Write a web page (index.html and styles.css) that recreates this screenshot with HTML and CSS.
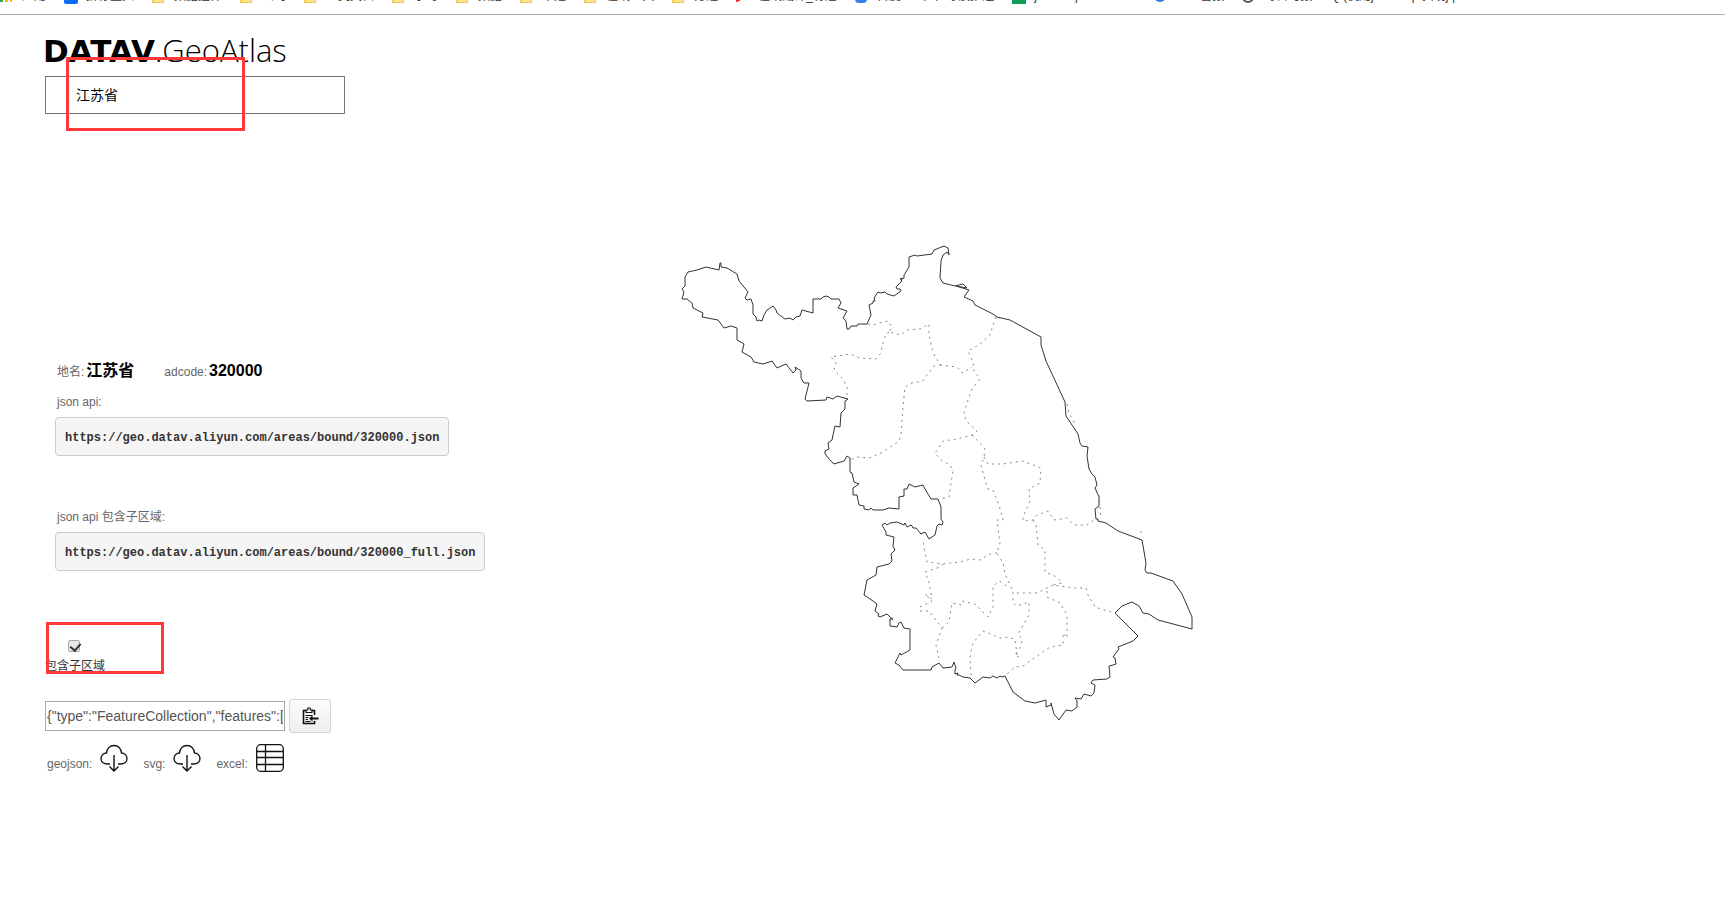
FILE: index.html
```html
<!DOCTYPE html>
<html lang="zh-CN">
<head>
    <meta charset="UTF-8">
    <meta name="viewport" content="width=device-width, initial-scale=1.0">
    <title>DATAV.GeoAtlas</title>
    <link rel="stylesheet" href="styles.css">
</head>
<body>
    <nav class="bookmarks">
        <div class="bookmark-row">
            <a href="#"><i class="icon apps"></i>应用</a>
            <a href="#"><i class="icon blue"></i>拼标盒头</a>
            <a href="#"><i class="icon folder"></i>数据控件</a>
            <a href="#"><i class="icon folder"></i>公司</a>
            <a href="#"><i class="icon folder"></i>三类文档</a>
            <a href="#"><i class="icon folder"></i>学习</a>
            <a href="#"><i class="icon folder"></i>数据</a>
            <a href="#"><i class="icon folder"></i>牛建</a>
            <a href="#"><i class="icon folder"></i>在线工具</a>
            <a href="#"><i class="icon folder"></i>方达</a>
            <a href="#"><i class="icon red"></i>在线翻译_有道</a>
            <a href="#"><i class="icon paw"></i>百度</a>
            <a href="#">中中 导航推送</a>
            <a href="#"><i class="icon green"></i>javascript - antdu...</a>
            <a href="#"><i class="icon bird"></i>SDE吉报</a>
            <a href="#"><i class="icon ring"></i>每日时报</a>
            <a href="#">Q (使用javascript实现jq...</a>
        </div>
    </nav>

    <main class="container">
        <aside class="sidebar">
            <h1><b>DATAV</b>.GeoAtlas</h1>
            <div class="search">
                <input type="text" class="search-input" aria-label="搜索地区" value="江苏省">
                <span class="mark mark-search"></span>
            </div>

            <section class="info">
                <p class="names">
                    <span>地名:<strong>江苏省</strong></span>
                    <span>adcode:<strong>320000</strong></span>
                </p>
                <p class="api-label">json api:</p>
                <pre>https://geo.datav.aliyun.com/areas/bound/320000.json</pre>
                <p class="api-label">json api 包含子区域:</p>
                <pre>https://geo.datav.aliyun.com/areas/bound/320000_full.json</pre>
            </section>

            <div class="children">
                <input type="checkbox" id="children" checked>
                <label for="children">包含子区域</label>
                <span class="mark mark-children"></span>
            </div>

            <div class="copy">
                <input type="text" class="copy-input" aria-label="geojson" value='{"type":"FeatureCollection","features":[{"type":"Feature"}]}'>
                <button type="button" class="copy-btn" aria-label="复制">
                    <svg width="17" height="18" viewBox="0 0 17 18" fill="none" stroke="#111" stroke-width="1.6">
                        <path d="M4 3.500H1.500v13h11v-2.500M10 3.500h2.500V8"/>
                        <path d="M4 5.500V3h1.500L6 1h2l.5 2H10v2.500z" stroke-width="1.2"/>
                        <path d="M3.500 8.500h7M3.500 10.500h3M3.500 12.500h2.500M3.500 14.500h5" stroke-width="1"/>
                        <path d="M16.500 11.500H9" stroke-width="2"/>
                        <path d="M7 11.500l3.500-3v6z" fill="#111" stroke="none"/>
                    </svg>
                </button>
            </div>

            <div class="downloads">
                <a href="#">geojson:
                    <svg width="28" height="28" viewBox="0 0 28 28" fill="none" stroke="#111" stroke-width="1.4">
                        <path d="M10 20H7.500C3.500 20 1 17.500 1 14.500S3.500 9 6.500 9C7 4.500 10 1.500 14 1.500S21 4.500 21.500 9C24.500 9 27 11.500 27 14.500S24.500 20 20.500 20H18"/>
                        <path d="M14 11v16M9.500 22.500L14 27l4.500-4.500"/>
                    </svg>
                </a>
                <a href="#">svg:
                    <svg width="28" height="28" viewBox="0 0 28 28" fill="none" stroke="#111" stroke-width="1.4">
                        <path d="M10 20H7.500C3.500 20 1 17.500 1 14.500S3.500 9 6.500 9C7 4.500 10 1.500 14 1.500S21 4.500 21.500 9C24.500 9 27 11.500 27 14.500S24.500 20 20.500 20H18"/>
                        <path d="M14 11v16M9.500 22.500L14 27l4.500-4.500"/>
                    </svg>
                </a>
                <a href="#">excel:
                    <svg width="28" height="28" viewBox="0 0 28 28" fill="none" stroke="#111" stroke-width="1.3">
                        <rect x="0.700" y="0.700" width="26.600" height="26.600" rx="4"/>
                        <path d="M1 7.500h26M1 13.500h26M1 20.500h26M9.500 1v26"/>
                    </svg>
                </a>
            </div>
        </aside>

        <svg class="map" width="540" height="500" viewBox="670 230 540 500" role="img" aria-label="江苏省">
            <!-- province boundary -->
            <path class="border" d="M688 272L697 270 706 267 719 270 720 263 721 263 721 267 727 268 737 274 739 281 744 287 748 292 747 294 745 298 747 300 751 299 753 305 753 314 756 317 757 321 759 320 762 321 764 315 767 310 770 308 773 306 776 310 777 313 785 319 790 318 793 320 796 317 800 316 802 310 813 313 813 299 821 299 823 297 826 296 829 297 831 299 839 299 841 303 838 308 847 311 843 318 846 321 847 329 849 329 851 326 857 326 858 324 867 324 871 315 869 305 873 303 873 301 875 301 874 298 878 292 880 293 885 292 887 294 894 296 901 291 900 289 897 289 896 287 901 282 902 279 900 279 904 278 904 275 909 267 909 257 915 255 917 256 932 254 934 250 944 246 948 248 949 255 947 252 943 255 941 261 940 278 943 283 955 286 963 284 967 288 956 286 969 290 964 297 973 301 975 305 993 314 997 317 1010 320 1041 337 1041 345 1046 361 1065 402 1066 416 1078 434 1080 443 1082 446 1088 447 1087 456 1089 469 1092 474 1095 477 1097 485 1095 488 1099 497 1099 506 1095 509 1096 519 1098 519 1098 521 1106 523 1118 531 1142 540 1146 563 1145 570 1147 573 1151 573 1173 581 1182 594 1192 617 1192 629 1158 620 1149 614 1143 613 1139 606 1132 602 1122 606 1115 613 1138 636 1133 641 1118 647 1119 649 1113 657 1115 658 1116 664 1113 665 1109 666 1110 677 1107 679 1093 680 1091 683 1095 685 1094 693 1091 696 1084 694 1081 699 1075 698 1077 701 1077 707 1072 711 1066 710 1059 720 1054 714 1051 703 1051 705 1046 707 1046 700 1035 703 1025 701 1013 692 1005 676 1002 677 1000 676 997 678 993 676 990 678 983 677 975 683 970 678 963 677 959 675 957 675 958 673 955 674 955 670 956 668 954 662 952 667 943 668 939 663 932 667 931 670 903 670 899 665 895 663 900 653 901 655 910 650 910 629 904 628 901 622 899 623 897 627 890 626 890 619 893 619 891 618 887 614 880 617 878 616 879 614 875 611 877 604 873 601 864 595 867 580 876 575 877 567 889 564 892 561 891 554 895 550 893 546 894 537 886 535 886 532 882 525 885 523 887 525 890 523 897 522 904 525 905 523 907 527 911 525 912 526 913 528 916 528 921 534 925 532 929 539 935 535 937 526 939 524 942 525 943 522 941 519 941 507 938 499 931 499 925 489 923 485 915 487 909 484 907 489 904 489 904 496 899 497 899 509 889 508 883 510 873 510 871 508 869 510 864 509 864 506 859 505 857 495 853 495 853 488 859 484 854 482 852 473 850 472 850 458 847 456 844 461 834 464 830 460 825 454 825 451 829 449 828 443 832 440 833 435 835 426 840 427 841 413 845 409 845 401 848 399 837 396 833 399 827 397 826 400 807 401 805 399 809 383 804 383 801 378 801 371 795 367 796 370 793 373 786 364 777 368 772 361 763 364 754 362 751 357 742 352 744 344 737 340 737 328 731 326 724 328 718 320 702 317 703 313 693 308 692 303 687 299 682 299 684 292 682 289 685 286 685 277Z"/>
            <!-- city boundaries -->
            <g class="inner">
                <path d="M868 324L873 325 879 323 888 321 892 327 889 332 901 335 907 330 920 329 929 324 929 333 931 345 935 357 941 365 957 367 962 373 972 367"/>
                <path d="M889 332L886 334 882 346 881 353 876 359 860 358 850 354 831 357 836 363 834 370 843 379 847 387 847 396"/>
                <path d="M941 365L934 366 927 375 923 381 912 383 905 387 903 407 901 435 899 441 883 452 870 458 857 457 850 460"/>
                <path d="M996 317L993 325 990 335 980 344 968 351 973 362 974 371 980 379 972 389 967 403 964 413 966 421 977 431 972 435 957 439 943 441 935 453 941 460 950 465 953 471 951 483 949 497 940 499"/>
                <path d="M972 435L980 443 985 449 984 457 981 465 985 480 988 489 993 490 999 505 1003 520 997 520 1000 543 997 553 1003 563 1005 574 1013 591 1013 603 1017 606 1029 602 1029 615 1018 634 1022 639 1020 648 1015 655 1020 658"/>
                <path d="M984 457L988 464 1003 464 1022 461 1039 467 1041 469 1040 483 1029 489 1030 501 1023 517 1023 521 1033 520 1037 515 1048 511 1054 520 1067 518 1074 525 1087 525 1095 519"/>
                <path d="M1033 520L1036 525 1038 545 1045 550 1045 572 1057 577 1062 583 1053 585 1073 588 1086 588 1088 595 1095 607 1114 613"/>
                <path d="M1053 585L1037 593 1014 593"/>
                <path d="M997 553L990 554 980 560 971 559 960 562 943 564 927 562 925 553 923 540"/>
                <path d="M943 564L940 567 925 572 929 582 932 599 925 594 932 601 920 607 920 611 929 611 942 628 936 645 939 658"/>
                <path d="M942 628L949 622 952 603 961 605 962 601 975 604 988 617 993 607 993 587 999 581 1008 587"/>
                <path d="M1017 655L1015 639 1005 637 1000 638 983 631 973 643 970 657 971 675"/>
                <path d="M1047 591L1047 597 1060 603 1067 615 1067 638 1063 633 1063 645 1050 647 1023 666 1015 667 1006 675"/>
                <path d="M1067 404L1069 413 1076 426"/>
                <path d="M1099 495L1101 519M1141 531V533"/>
            </g>
        </svg>
    </main>
</body>
</html>
```
FILE: styles.css
```css
* {
    margin: 0;
    padding: 0;
    box-sizing: border-box;
}
body {
    font-family: "Liberation Sans", "Noto Sans CJK SC", sans-serif;
    font-size: 12px;
    line-height: 16px;
    color: #666;
    background: #fff;
}

/* bookmarks strip */
.bookmarks {
    height: 15px;
    overflow: hidden;
    border-bottom: 1px solid #b0b0b0;
}
.bookmark-row {
    display: flex;
    gap: 18px;
    margin-top: -12px;
    white-space: nowrap;
}
.bookmark-row a {
    display: flex;
    gap: 10px;
    color: #333;
    text-decoration: none;
}
.icon {
    width: 12px;
    height: 16px;
}
.apps {
    background: linear-gradient(to right, #3a9e4b 3px, #fff 3px 5px, #fbb803 5px 8px, #fff 8px 10px, #fbb803 10px);
    height: 14px;
}
.blue {
    width: 14px;
    margin-right: -2px;
    background: #0a6cff;
    border-radius: 2px;
}
.folder {
    height: 15px;
    background: #fbe28b;
    border: 1px solid #e8c64d;
}
.red {
    width: 6px;
    height: 14px;
    margin-right: 6px;
    background: #e8262b;
    border-radius: 0 0 6px 0;
}
.paw {
    height: 15px;
    background: #3a7ff0;
    border-radius: 4px;
}
.green {
    width: 14px;
    margin-right: -2px;
    background: #0f9d58;
}
.bird {
    height: 14px;
    background: #2f7fd6;
    border-radius: 0 0 6px 6px;
}
.ring {
    height: 15px;
    border: 2px solid #555;
    border-radius: 6px;
}

/* page */
.container {
    display: flex;
    align-items: flex-start;
}
.sidebar {
    width: 490px;
    padding: 14px 0 0 43px;
}
h1 {
    font-family: "Open Sans", sans-serif;
    font-size: 31px;
    font-weight: 300;
    line-height: 42px;
    color: #000;
}
h1 b {
    font-family: "DejaVu Sans", sans-serif;
    font-weight: bold;
}
.search,
.info,
.children,
.copy,
.downloads {
    margin-left: 2px;
}
.search {
    position: relative;
    width: 300px;
    margin-top: 4px;
}
.search-input {
    display: block;
    width: 100%;
    height: 38px;
    padding: 0 30px 3px;
    border: 1px solid #767676;
    font-family: inherit;
    font-size: 14px;
    color: #000;
}
.mark {
    position: absolute;
    border: 3px solid #ff3838;
    pointer-events: none;
}
.mark-search {
    left: 21px;
    top: -19px;
    width: 179px;
    height: 74px;
}
.info {
    margin-top: 247px;
    padding-left: 10px;
}
.names {
    display: flex;
    gap: 30px;
    padding-left: 2px;
    line-height: 20px;
}
.names strong {
    margin-left: 2px;
    font-size: 16px;
    color: #000;
}
.api-label {
    margin-top: 12px;
    padding-left: 2px;
}
pre {
    width: fit-content;
    margin: 7px 0 53px;
    padding: 12px 9px 9px;
    border: 1px solid #ccc;
    border-radius: 4px;
    background: #f5f5f5;
    color: #333;
    font-family: "Liberation Mono", monospace;
    font-size: 12px;
    font-weight: bold;
    line-height: 16px;
}
.children {
    position: relative;
    margin-top: 69px;
    color: #333;
}
.children input {
    display: block;
    appearance: none;
    width: 12px;
    height: 12px;
    margin: 0 0 6px 23px;
    border: 1px solid #aaa;
    border-radius: 2px;
    background: #e8e8e8;
}
.children input:checked::after {
    content: "";
    display: block;
    width: 5px;
    height: 8px;
    margin-left: 3px;
    border: solid #333;
    border-width: 0 2px 2px 0;
    transform: rotate(40deg);
}
.children label {
    display: block;
}
.mark-children {
    left: 1px;
    top: -18px;
    width: 118px;
    height: 52px;
}
.copy {
    display: flex;
    align-items: center;
    gap: 4px;
    margin-top: 25px;
}
.copy-input {
    width: 240px;
    height: 30px;
    padding: 0 1px;
    border: 1px solid #a9a9a9;
    font-family: inherit;
    font-size: 14px;
    color: #555;
}
.copy-btn {
    display: flex;
    align-items: center;
    justify-content: center;
    width: 42px;
    height: 34px;
    border: 1px solid #d5d5d5;
    border-radius: 3px;
    background: linear-gradient(#fcfcfc, #eee);
    cursor: pointer;
}
.downloads {
    display: flex;
    gap: 15px;
    margin-top: 11px;
    padding-left: 2px;
}
.downloads a {
    display: flex;
    align-items: flex-end;
    gap: 8px;
    color: #666;
    text-decoration: none;
}
.map {
    margin: 215px 0 0 180px;
}
.border {
    fill: none;
    stroke: #333;
    stroke-width: 1;
}
.inner path {
    fill: none;
    stroke: #888;
    stroke-width: 1;
    stroke-dasharray: 2 4;
}
```
